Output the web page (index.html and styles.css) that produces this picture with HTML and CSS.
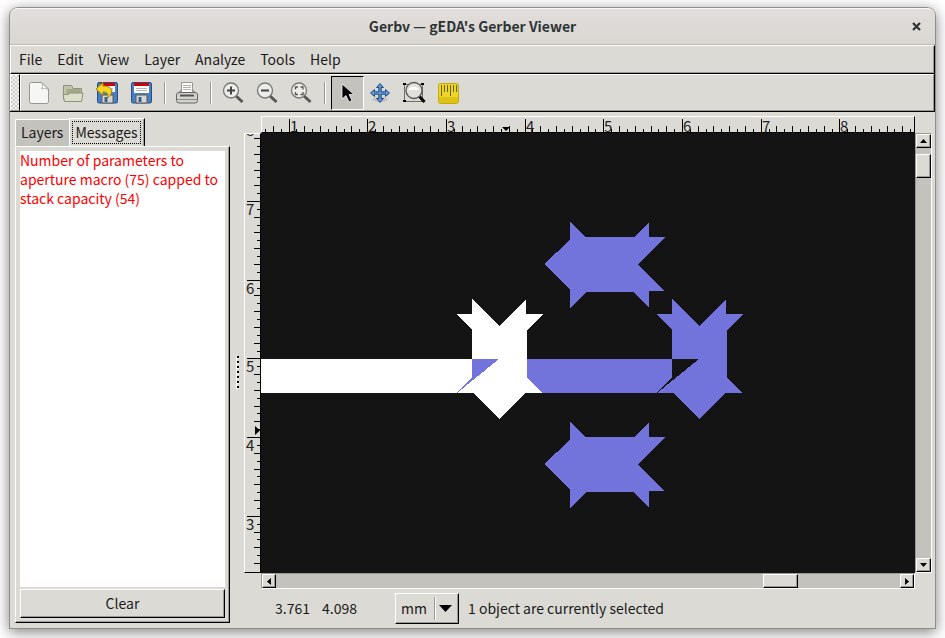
FILE: index.html
```html
<!DOCTYPE html>
<html lang="en">
<head>
    <meta charset="UTF-8">
    <meta name="viewport" content="width=device-width, initial-scale=1.0">
    <title>Gerbv — gEDA's Gerber Viewer</title>
    <link rel="stylesheet" href="styles.css">
</head>
<body>
    <div class="window">
        <header class="titlebar">
            <h1>Gerbv — gEDA's Gerber Viewer</h1>
            <button class="close" aria-label="Close">
                <svg width="9" height="9" viewBox="0 0 9 9"><path d="M1 1l7 7M8 1l-7 7" stroke="#2e3436" stroke-width="2.2"/></svg>
            </button>
        </header>

        <nav class="menubar">
            <button>File</button>
            <button>Edit</button>
            <button>View</button>
            <button>Layer</button>
            <button>Analyze</button>
            <button>Tools</button>
            <button>Help</button>
        </nav>

        <div class="toolbar">
            <div class="handle"></div>
            <div class="tools">
                <button aria-label="New">
                    <svg width="24" height="24" viewBox="0 0 24 24">
                        <path d="M2.5 3.5a2 2 0 0 1 2-2h10.5l6.500 6.500v12.5a2 2 0 0 1-2 2h-15a2 2 0 0 1-2-2z" fill="#f6f6f5" stroke="#969692"/>
                        <path d="M15 2c1 2 .5 4-.5 6 2-.8 4.5-1 6.500.5z" fill="#fff" stroke="#a8a8a4" stroke-width=".8"/>
                    </svg>
                </button>
                <button aria-label="Open">
                    <svg width="24" height="24" viewBox="0 0 24 24">
                        <path d="M2.5 18.5v-14h8l1.500 3h8.500v11z" fill="#c0c5a6" stroke="#8d9379"/>
                        <path d="M5.500 8h14v6h-14z" fill="#a3a98c"/>
                        <path d="M3.500 20.500l-1.500-7h5l2-1.500h13l-1.500 8.500z" fill="#dce0c6" stroke="#8d9379"/>
                    </svg>
                </button>
                <button aria-label="Revert">
                    <svg width="24" height="24" viewBox="0 0 24 24">
                        <rect x="2.5" y="1.5" width="20" height="20.5" rx="1.5" fill="#4a7fc1" stroke="#244f8a"/>
                        <path d="M5 2h15v9H5z" fill="#fff"/>
                        <path d="M5 2h15v3H5z" fill="#d40000"/>
                        <path d="M7 7.500h11M7 9.500h11" stroke="#b5b5b5"/>
                        <path d="M7 14h11v8H7z" fill="#d5d5d1" stroke="#5b5b58"/>
                        <path d="M9.500 16h3v5h-3z" fill="#3a5e91"/>
                        <path d="M1 8l7-6.500v3.500c7 0 10 3 8 8-1 2-2 3-4 4 2-4 0-6-4-6v3.500z" fill="#f5d423" stroke="#a18207"/>
                    </svg>
                </button>
                <button aria-label="Save">
                    <svg width="24" height="24" viewBox="0 0 24 24">
                        <rect x="2.5" y="1.5" width="20" height="20.5" rx="1.5" fill="#4a7fc1" stroke="#244f8a"/>
                        <path d="M5 2h15v10H5z" fill="#fff"/>
                        <path d="M5 2h15v3H5z" fill="#d40000"/>
                        <path d="M7 7.500h11M7 9.500h11" stroke="#b5b5b5"/>
                        <path d="M7 14h11v8H7z" fill="#d5d5d1" stroke="#5b5b58"/>
                        <path d="M9.500 16h3v5h-3z" fill="#3a5e91"/>
                    </svg>
                </button>
                <span class="separator"></span>
                <button aria-label="Print">
                    <svg width="24" height="24" viewBox="0 0 24 24">
                        <path d="M3.500 12.500l2-3h13l2 3z" fill="#c5c5c2" stroke="#777774"/>
                        <path d="M6.500 1.500h11v10h-11z" fill="#fff" stroke="#979794"/>
                        <path d="M8 4.500h8M8 6.500h8M8 8.500h8" stroke="#b0b0ad"/>
                        <rect x="1.5" y="11.5" width="21" height="10.5" rx="2.5" fill="#d3d3d0" stroke="#656562"/>
                        <path d="M5 14.500h14" stroke="#555" stroke-width="2"/>
                        <path d="M2 18.500h20" stroke="#8a8a87"/>
                    </svg>
                </button>
                <span class="separator"></span>
                <button aria-label="Zoom in">
                    <svg width="24" height="24" viewBox="0 0 24 24">
                        <path d="M15 15l6.500 6" stroke="#555753" stroke-width="3"/>
                        <circle cx="10" cy="9.5" r="7.5" fill="#ececea" stroke="#777a75" stroke-width="1.3"/>
                        <path d="M6 9.500h8M10 5.500v8" stroke="#444643" stroke-width="2"/>
                    </svg>
                </button>
                <button aria-label="Zoom out">
                    <svg width="24" height="24" viewBox="0 0 24 24">
                        <path d="M15 15l6.500 6" stroke="#555753" stroke-width="3"/>
                        <circle cx="10" cy="9.5" r="7.5" fill="#ececea" stroke="#777a75" stroke-width="1.3"/>
                        <path d="M6 9.500h8" stroke="#444643" stroke-width="2"/>
                    </svg>
                </button>
                <button aria-label="Zoom to fit">
                    <svg width="24" height="24" viewBox="0 0 24 24">
                        <path d="M15 15l6.500 6" stroke="#555753" stroke-width="3"/>
                        <circle cx="10" cy="9.5" r="7.5" fill="#ececea" stroke="#777a75" stroke-width="1.3"/>
                        <path d="M6.500 8.500v-2.500h2.500M11.500 6h2.500v2.500M14 11v2.500h-2.500M9 13.500h-2.500v-2.500" fill="none" stroke="#555753" stroke-width="1.3"/>
                    </svg>
                </button>
                <span class="separator"></span>
                <button class="active" aria-label="Select" aria-pressed="true">
                    <svg width="24" height="24" viewBox="0 0 24 24">
                        <path d="M7 3v15l4-3.500 3 6.500 3-1.500-3-6h5z" fill="#000" stroke="#f4f4f4" stroke-width=".8"/>
                    </svg>
                </button>
                <button aria-label="Pan">
                    <svg width="24" height="24" viewBox="0 0 24 24">
                        <ellipse cx="12" cy="18.5" rx="8" ry="2.5" fill="#c4c3be"/>
                        <path d="M12 2.500l3.500 4h-2.300v4.300h4.300v-2.300l4 3.500-4 3.500v-2.300h-4.300v4.300h2.300l-3.500 4-3.500-4h2.300v-4.300h-4.300v2.300l-4-3.500 4-3.500v2.300h4.300v-4.300h-2.300z" fill="#5e94cf" stroke="#204a87"/>
                    </svg>
                </button>
                <button aria-label="Zoom area">
                    <svg width="24" height="24" viewBox="0 0 24 24">
                        <path d="M2.500 3.500h18v17h-18z" fill="none" stroke="#000" stroke-dasharray="1 1"/>
                        <path d="M1 2h3v2h-3zM19 2h3v2h-3zM1 19h3v2h-3z"/>
                        <path d="M17 15l5.500 6" stroke="#000" stroke-width="3"/>
                        <circle cx="12" cy="9.5" r="8" fill="#e0e0de" stroke="#555" stroke-width="1.3"/>
                        <path d="M6 9a6 5.500 0 0 1 11 0z" fill="#fff"/>
                    </svg>
                </button>
                <button aria-label="Measure">
                    <svg width="24" height="24" viewBox="0 0 24 24">
                        <rect x="2.5" y="2.5" width="20" height="20" rx="2" fill="#edd62c" stroke="#c2aa08"/>
                        <path d="M3 16h19v6h-19z" fill="#dcc315"/>
                        <path d="M5.500 4v11M8.500 4v7M11.500 4v7M14.500 4v11M17.500 4v7M20.500 4v7" stroke="#6f6106"/>
                    </svg>
                </button>
            </div>
        </div>

        <main class="content">
            <section class="sidebar">
                <div class="tabs" role="tablist">
                    <button class="tab" role="tab" aria-selected="false">Layers</button>
                    <button class="tab selected" role="tab" aria-selected="true"><span>Messages</span></button>
                </div>
                <div class="panel">
                    <p class="messages">Number of parameters to aperture macro (75) capped to stack capacity (54)</p>
                    <button class="clear">Clear</button>
                </div>
            </section>

            <div class="splitter"><span></span></div>

            <section class="viewer">
                <svg class="ruler ruler-x" id="rulerX"></svg>
                <svg class="ruler ruler-y" id="rulerY"></svg>
                <svg class="canvas" shape-rendering="crispEdges">
                    <defs>
                        <path id="pad" d="M309 89L324 104H373L388 89V104H404L377 131L403 158H388V175L372 159H325L309 175V157L283 131L309 107z"/>
                        <path id="flash" d="M211 166L238 193L265 166V181H282L266 197V244L281 260H264L238 286L213 260H196L238 226H211V197L195 181H211z"/>
                        <path id="gap" d="M211 226H238L196 260H195L211 245z"/>
                    </defs>
                    <rect x="211" y="226" width="200" height="34" fill="#7373dc"/>
                    <rect x="0" y="226" width="211" height="34" fill="#fff"/>
                    <use href="#pad" fill="#7373dc"/>
                    <use href="#pad" y="200" fill="#7373dc"/>
                    <use href="#flash" fill="#fff"/>
                    <use href="#gap" fill="#7373dc"/>
                    <use href="#flash" x="200" fill="#7373dc"/>
                    <use href="#gap" x="200" fill="#141414"/>
                </svg>
                <div class="scroll scroll-y">
                    <button aria-label="Scroll up"><svg width="7" height="4" viewBox="0 0 7 4"><path d="M0 4h7L3.500 0z"/></svg></button>
                    <div class="track"><div class="thumb"></div></div>
                    <button aria-label="Scroll down"><svg width="7" height="4" viewBox="0 0 7 4"><path d="M0 0h7L3.500 4z"/></svg></button>
                </div>
                <div class="scroll scroll-x">
                    <button aria-label="Scroll left"><svg width="4" height="7" viewBox="0 0 4 7"><path d="M4 0v7L0 3.500z"/></svg></button>
                    <div class="track"><div class="thumb"></div></div>
                    <button aria-label="Scroll right"><svg width="4" height="7" viewBox="0 0 4 7"><path d="M0 0v7L4 3.500z"/></svg></button>
                </div>
                <footer class="status">
                    <span class="coords"><span>3.761</span><span>4.098</span></span>
                    <select class="unit" aria-label="Unit">
                        <option>mil</option>
                        <option selected>mm</option>
                        <option>in</option>
                    </select>
                    <span>1 object are currently selected</span>
                </footer>
            </section>
        </main>
    </div>

    <script src="ruler.js"></script>
</body>
</html>
```
FILE: styles.css
```css
* {
    box-sizing: border-box;
}
body {
    margin: 0;
    height: 100vh;
    padding: 8px 10px 10px;
    background: #fff;
    color: #1a1a1a;
    font-family: "Noto Sans CJK SC", "Noto Sans", sans-serif;
    font-size: 14px;
    line-height: 19px;
    overflow: hidden;
}
button, select {
    font: inherit;
    color: inherit;
    background: #dcdad5;
    border: 0;
    padding: 0;
    margin: 0;
}
svg {
    display: block;
}
.window {
    height: 100%;
    display: flex;
    flex-direction: column;
    background: #dcdad5;
    border-radius: 8px 8px 0 0;
    box-shadow: 0 0 0 1px #8e8e8c, 0 3px 14px 1px rgba(0, 0, 0, 0.5);
}

/* title and menu */
.titlebar {
    height: 37px;
    display: flex;
    align-items: center;
    padding: 0 14px 0 23px;
    background: linear-gradient(#e1dedb, #dad6d2);
    border-top: 1px solid #f8f8f7;
    border-bottom: 1px solid #bfb8b1;
    border-radius: 8px 8px 0 0;
}
.titlebar .close {
    background: none;
}
.titlebar h1 {
    flex: 1;
    margin: 0;
    font-size: 14px;
    font-weight: bold;
    text-align: center;
    color: #2e3436;
}
.menubar {
    height: 29px;
    display: flex;
    align-items: center;
    gap: 15px;
    padding: 0 8px;
    border: 1px solid;
    border-color: #fff #000 #000 #fff;
    box-shadow: inset -1px -1px #9c9a94;
}
.toolbar {
    height: 38px;
    display: flex;
    border-bottom: 1px solid #000;
    border-right: 1px solid #000;
    box-shadow: inset -1px -1px #9c9a94;
}
.handle {
    width: 10px;
    border: 1px solid;
    border-color: #fff #000 #9c9a94 #fff;
    background: repeating-conic-gradient(#cfcdc8 0 25%, #f4f3f1 0 50%) 0 0 / 4px 4px;
}
.tools {
    flex: 1;
    display: flex;
    align-items: center;
    padding-left: 2px;
    border: 1px solid;
    border-color: #fff transparent transparent #fff;
}
.tools button {
    width: 34px;
    height: 34px;
    display: flex;
    align-items: center;
    justify-content: center;
    padding-right: 2px;
    background: none;
}
.tools .active {
    width: 33px;
    background: #c4c2bd;
    border: 1px solid;
    border-color: #000 #fff #fff #000;
}
.separator {
    width: 2px;
    height: 22px;
    margin: 0 5px;
    background: linear-gradient(90deg, #9c9a94 50%, #fff 50%);
}

/* messages */
.content {
    flex: 1;
    min-height: 0;
    display: flex;
    padding: 4px 3px 5px 5px;
}
.sidebar {
    width: 215px;
    display: flex;
    flex-direction: column;
    padding-top: 2px;
}
.tabs {
    display: flex;
    align-items: flex-end;
}
.tab {
    height: 27px;
    padding: 0 5px;
    background: #c4c2bd;
    border: 1px solid;
    border-color: #fff transparent transparent #fff;
}
.tab.selected {
    height: 29px;
    margin-bottom: -1px;
    padding: 2px 3px 2px 2px;
    background: #dcdad5;
    border-right-color: #000;
    box-shadow: inset -1px 0 #9c9a94;
}
.tab.selected span {
    display: block;
    padding: 1px 2px;
    border: 1px dotted #000;
}
.panel {
    flex: 1;
    display: flex;
    flex-direction: column;
    gap: 2px;
    padding: 4px;
    border: 1px solid;
    border-color: #fff #000 #000 #fff;
    box-shadow: inset -1px -1px #9c9a94;
}
.messages {
    flex: 1;
    margin: 0;
    background: #fff;
    color: #f00;
}
.clear {
    height: 29px;
    border: 1px solid;
    border-color: #fff #000 #000 #fff;
    box-shadow: inset -1px -1px #9c9a94;
}
.splitter {
    width: 14px;
    display: flex;
    align-items: center;
    justify-content: center;
    padding-top: 6px;
}
.splitter span {
    width: 3px;
    height: 33px;
    background:
        linear-gradient(#000, #000) 1px 1px / 2px 5px no-repeat,
        linear-gradient(#fff, #fff) 0 0 / 2px 2px no-repeat;
    background:
        linear-gradient(90deg, #fff 1px, transparent 1px),
        repeating-linear-gradient(#000 0 2px, #fff 2px 3px, #dcdad5 3px 5px);
}

/* drawing area */
.viewer {
    flex: 1;
    min-width: 0;
    display: grid;
    grid-template-columns: 17px 1fr 17px;
    grid-template-rows: 17px 1fr 16px 34px;
}
.ruler {
    width: 100%;
    height: 100%;
    overflow: hidden;
    border: 1px solid;
    border-color: #fff #000 #000 #fff;
    font-size: 15px;
}
.ruler-x {
    grid-area: 1 / 2;
    overflow: visible;
}
.ruler-y {
    grid-area: 2 / 1;
}
.canvas {
    grid-area: 2 / 2;
    width: 100%;
    height: 100%;
    background: #141414;
    overflow: hidden;
}
.scroll {
    display: flex;
    background: #c4c2bd;
    border: 1px solid;
    border-color: #9c9a94 #fff #fff #9c9a94;
}
.scroll-y {
    grid-area: 2 / 3;
    flex-direction: column;
}
.scroll-x {
    grid-area: 3 / 2;
}
.scroll button, .thumb {
    display: flex;
    align-items: center;
    justify-content: center;
    flex: none;
    width: 14px;
    height: 14px;
    background: #dcdad5;
    border: 1px solid;
    border-color: #fff #000 #000 #fff;
    box-shadow: inset -1px -1px #9c9a94;
}
.scroll-y button, .scroll-y .thumb {
    width: 15px;
}
.track {
    flex: 1;
    display: flex;
}
.scroll-y .track {
    padding-top: 6px;
}
.scroll-y .thumb {
    height: 24px;
}
.scroll-x .track {
    justify-content: flex-end;
    padding-right: 102px;
}
.scroll-x .thumb {
    width: 35px;
}
.status {
    grid-area: 4 / 1 / 5 / 4;
    display: flex;
    align-items: center;
    padding: 4px 0 0 31px;
}
.coords {
    display: flex;
    gap: 12px;
    width: 120px;
}
.unit {
    appearance: none;
    width: 64px;
    height: 31px;
    margin-right: 9px;
    padding: 0 5px;
    border: 1px solid;
    border-color: #fff #000 #000 #fff;
    border-radius: 0;
    box-shadow: inset -1px -1px #9c9a94;
    background:
        url("data:image/svg+xml,%3Csvg xmlns='http://www.w3.org/2000/svg' width='13' height='7'%3E%3Cpath d='M0 0h13L6.5 7z'/%3E%3C/svg%3E") 43px 11px no-repeat,
        linear-gradient(90deg, #9c9a94 50%, #fff 50%) 38px 3px / 2px 23px no-repeat,
        #dcdad5;
}
```
FILE: ruler.js
```js
const SVG_NS = "http://www.w3.org/2000/svg";
const UNIT = 78.7;

function addTo(parent, tag, attrs, text) {
    const el = document.createElementNS(SVG_NS, tag);
    for (const key in attrs) el.setAttribute(key, attrs[key]);
    if (text) el.textContent = text;
    parent.appendChild(el);
}

function tickLength(i) {
    if (i % 10 === 0) return 13;
    return i % 2 === 0 ? 6 : 3;
}

// ticks every 0.1 mm, 1 mm is UNIT pixels
const rulerX = document.getElementById("rulerX");
const rulerY = document.getElementById("rulerY");

for (let i = 7; i < 90; i++) {
    const x = Math.floor(27 + (i - 10) * UNIT / 10);
    const len = tickLength(i);
    addTo(rulerX, "rect", { x: x, y: 15 - len, width: 1, height: len });
    if (i % 10 === 0) addTo(rulerX, "text", { x: x + 1, y: 15, fill: "#222" }, String(i / 10));
}

for (let i = 24; i < 81; i++) {
    const y = Math.floor(67.5 + (70 - i) * UNIT / 10);
    const len = tickLength(i);
    addTo(rulerY, "rect", { x: 15 - len, y: y, width: len, height: 1 });
    if (i % 10 === 0) addTo(rulerY, "text", { x: 1, y: y + 14, fill: "#222" }, String(i / 10));
}

// pointer position markers
addTo(rulerX, "path", { d: "M240 10h8l-4 4z" });
addTo(rulerY, "path", { d: "M10 292v9l5-4.500z" });
```
